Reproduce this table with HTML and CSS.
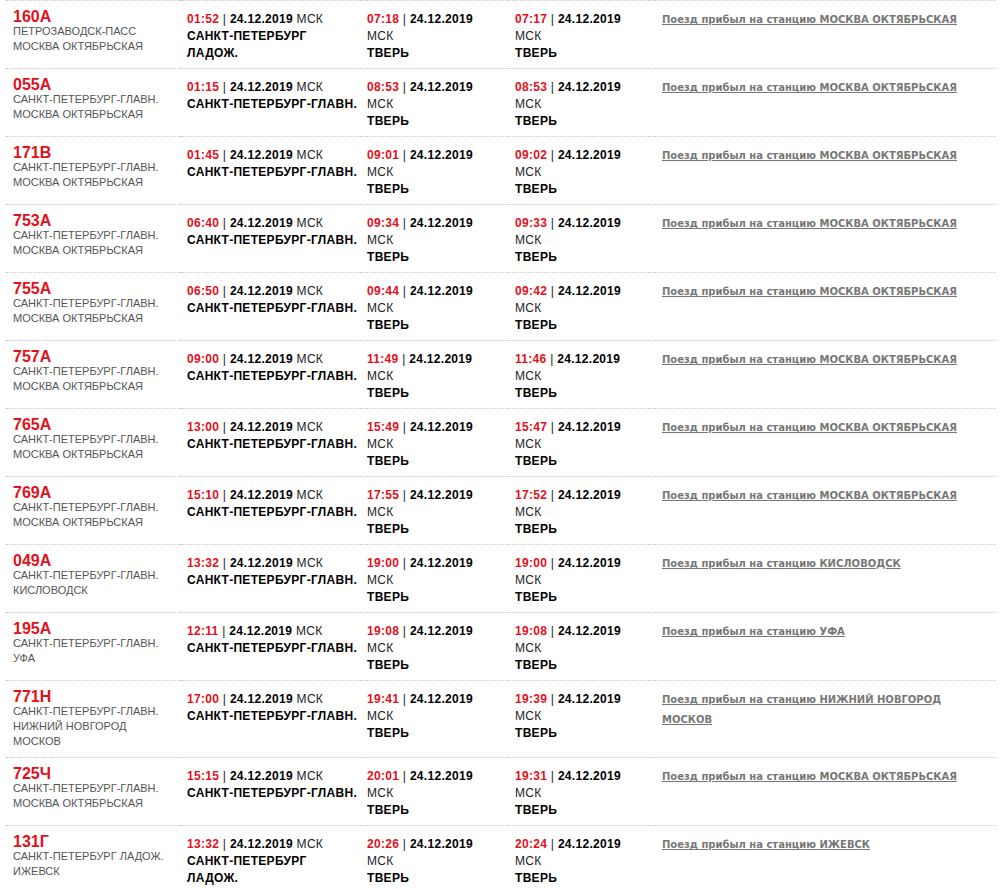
FILE: index.html
```html
<!doctype html>
<html lang="ru">
<head>
  <meta charset="utf-8">
  <title>Табло прибытия поездов</title>
  <link rel="stylesheet" href="styles.css">
</head>
<body>

<table class="trains">
  <colgroup>
    <col class="c-num"><col class="c-dep"><col class="c-arr"><col class="c-arr2"><col class="c-st">
  </colgroup>
  <tr>
    <td class="num"><div class="no">160А</div><div class="rt">ПЕТРОЗАВОДСК-ПАСС</div><div class="rt">МОСКВА ОКТЯБРЬСКАЯ</div></td>
    <td class="tm dep"><b class="t">01:52</b> | <b>24.12.2019</b> МСК<br><b>САНКТ-ПЕТЕРБУРГ<br>ЛАДОЖ.</b></td>
    <td class="tm"><b class="t">07:18</b> | <b>24.12.2019</b><br>МСК<br><b>ТВЕРЬ</b></td>
    <td class="tm"><b class="t">07:17</b> | <b>24.12.2019</b><br>МСК<br><b>ТВЕРЬ</b></td>
    <td class="st"><a href="#">Поезд прибыл на станцию МОСКВА ОКТЯБРЬСКАЯ</a></td>
  </tr>
  <tr>
    <td class="num"><div class="no">055А</div><div class="rt">САНКТ-ПЕТЕРБУРГ-ГЛАВН.</div><div class="rt">МОСКВА ОКТЯБРЬСКАЯ</div></td>
    <td class="tm dep"><b class="t">01:15</b> | <b>24.12.2019</b> МСК<br><b>САНКТ-ПЕТЕРБУРГ-ГЛАВН.</b></td>
    <td class="tm"><b class="t">08:53</b> | <b>24.12.2019</b><br>МСК<br><b>ТВЕРЬ</b></td>
    <td class="tm"><b class="t">08:53</b> | <b>24.12.2019</b><br>МСК<br><b>ТВЕРЬ</b></td>
    <td class="st"><a href="#">Поезд прибыл на станцию МОСКВА ОКТЯБРЬСКАЯ</a></td>
  </tr>
  <tr>
    <td class="num"><div class="no">171В</div><div class="rt">САНКТ-ПЕТЕРБУРГ-ГЛАВН.</div><div class="rt">МОСКВА ОКТЯБРЬСКАЯ</div></td>
    <td class="tm dep"><b class="t">01:45</b> | <b>24.12.2019</b> МСК<br><b>САНКТ-ПЕТЕРБУРГ-ГЛАВН.</b></td>
    <td class="tm"><b class="t">09:01</b> | <b>24.12.2019</b><br>МСК<br><b>ТВЕРЬ</b></td>
    <td class="tm"><b class="t">09:02</b> | <b>24.12.2019</b><br>МСК<br><b>ТВЕРЬ</b></td>
    <td class="st"><a href="#">Поезд прибыл на станцию МОСКВА ОКТЯБРЬСКАЯ</a></td>
  </tr>
  <tr>
    <td class="num"><div class="no">753А</div><div class="rt">САНКТ-ПЕТЕРБУРГ-ГЛАВН.</div><div class="rt">МОСКВА ОКТЯБРЬСКАЯ</div></td>
    <td class="tm dep"><b class="t">06:40</b> | <b>24.12.2019</b> МСК<br><b>САНКТ-ПЕТЕРБУРГ-ГЛАВН.</b></td>
    <td class="tm"><b class="t">09:34</b> | <b>24.12.2019</b><br>МСК<br><b>ТВЕРЬ</b></td>
    <td class="tm"><b class="t">09:33</b> | <b>24.12.2019</b><br>МСК<br><b>ТВЕРЬ</b></td>
    <td class="st"><a href="#">Поезд прибыл на станцию МОСКВА ОКТЯБРЬСКАЯ</a></td>
  </tr>
  <tr>
    <td class="num"><div class="no">755А</div><div class="rt">САНКТ-ПЕТЕРБУРГ-ГЛАВН.</div><div class="rt">МОСКВА ОКТЯБРЬСКАЯ</div></td>
    <td class="tm dep"><b class="t">06:50</b> | <b>24.12.2019</b> МСК<br><b>САНКТ-ПЕТЕРБУРГ-ГЛАВН.</b></td>
    <td class="tm"><b class="t">09:44</b> | <b>24.12.2019</b><br>МСК<br><b>ТВЕРЬ</b></td>
    <td class="tm"><b class="t">09:42</b> | <b>24.12.2019</b><br>МСК<br><b>ТВЕРЬ</b></td>
    <td class="st"><a href="#">Поезд прибыл на станцию МОСКВА ОКТЯБРЬСКАЯ</a></td>
  </tr>
  <tr>
    <td class="num"><div class="no">757А</div><div class="rt">САНКТ-ПЕТЕРБУРГ-ГЛАВН.</div><div class="rt">МОСКВА ОКТЯБРЬСКАЯ</div></td>
    <td class="tm dep"><b class="t">09:00</b> | <b>24.12.2019</b> МСК<br><b>САНКТ-ПЕТЕРБУРГ-ГЛАВН.</b></td>
    <td class="tm"><b class="t">11:49</b> | <b>24.12.2019</b><br>МСК<br><b>ТВЕРЬ</b></td>
    <td class="tm"><b class="t">11:46</b> | <b>24.12.2019</b><br>МСК<br><b>ТВЕРЬ</b></td>
    <td class="st"><a href="#">Поезд прибыл на станцию МОСКВА ОКТЯБРЬСКАЯ</a></td>
  </tr>
  <tr>
    <td class="num"><div class="no">765А</div><div class="rt">САНКТ-ПЕТЕРБУРГ-ГЛАВН.</div><div class="rt">МОСКВА ОКТЯБРЬСКАЯ</div></td>
    <td class="tm dep"><b class="t">13:00</b> | <b>24.12.2019</b> МСК<br><b>САНКТ-ПЕТЕРБУРГ-ГЛАВН.</b></td>
    <td class="tm"><b class="t">15:49</b> | <b>24.12.2019</b><br>МСК<br><b>ТВЕРЬ</b></td>
    <td class="tm"><b class="t">15:47</b> | <b>24.12.2019</b><br>МСК<br><b>ТВЕРЬ</b></td>
    <td class="st"><a href="#">Поезд прибыл на станцию МОСКВА ОКТЯБРЬСКАЯ</a></td>
  </tr>
  <tr>
    <td class="num"><div class="no">769А</div><div class="rt">САНКТ-ПЕТЕРБУРГ-ГЛАВН.</div><div class="rt">МОСКВА ОКТЯБРЬСКАЯ</div></td>
    <td class="tm dep"><b class="t">15:10</b> | <b>24.12.2019</b> МСК<br><b>САНКТ-ПЕТЕРБУРГ-ГЛАВН.</b></td>
    <td class="tm"><b class="t">17:55</b> | <b>24.12.2019</b><br>МСК<br><b>ТВЕРЬ</b></td>
    <td class="tm"><b class="t">17:52</b> | <b>24.12.2019</b><br>МСК<br><b>ТВЕРЬ</b></td>
    <td class="st"><a href="#">Поезд прибыл на станцию МОСКВА ОКТЯБРЬСКАЯ</a></td>
  </tr>
  <tr>
    <td class="num"><div class="no">049А</div><div class="rt">САНКТ-ПЕТЕРБУРГ-ГЛАВН.</div><div class="rt">КИСЛОВОДСК</div></td>
    <td class="tm dep"><b class="t">13:32</b> | <b>24.12.2019</b> МСК<br><b>САНКТ-ПЕТЕРБУРГ-ГЛАВН.</b></td>
    <td class="tm"><b class="t">19:00</b> | <b>24.12.2019</b><br>МСК<br><b>ТВЕРЬ</b></td>
    <td class="tm"><b class="t">19:00</b> | <b>24.12.2019</b><br>МСК<br><b>ТВЕРЬ</b></td>
    <td class="st"><a href="#">Поезд прибыл на станцию КИСЛОВОДСК</a></td>
  </tr>
  <tr>
    <td class="num"><div class="no">195А</div><div class="rt">САНКТ-ПЕТЕРБУРГ-ГЛАВН.</div><div class="rt">УФА</div></td>
    <td class="tm dep"><b class="t">12:11</b> | <b>24.12.2019</b> МСК<br><b>САНКТ-ПЕТЕРБУРГ-ГЛАВН.</b></td>
    <td class="tm"><b class="t">19:08</b> | <b>24.12.2019</b><br>МСК<br><b>ТВЕРЬ</b></td>
    <td class="tm"><b class="t">19:08</b> | <b>24.12.2019</b><br>МСК<br><b>ТВЕРЬ</b></td>
    <td class="st"><a href="#">Поезд прибыл на станцию УФА</a></td>
  </tr>
  <tr>
    <td class="num"><div class="no">771Н</div><div class="rt">САНКТ-ПЕТЕРБУРГ-ГЛАВН.</div><div class="rt">НИЖНИЙ НОВГОРОД<br>МОСКОВ</div></td>
    <td class="tm dep"><b class="t">17:00</b> | <b>24.12.2019</b> МСК<br><b>САНКТ-ПЕТЕРБУРГ-ГЛАВН.</b></td>
    <td class="tm"><b class="t">19:41</b> | <b>24.12.2019</b><br>МСК<br><b>ТВЕРЬ</b></td>
    <td class="tm"><b class="t">19:39</b> | <b>24.12.2019</b><br>МСК<br><b>ТВЕРЬ</b></td>
    <td class="st"><a href="#">Поезд прибыл на станцию НИЖНИЙ НОВГОРОД МОСКОВ</a></td>
  </tr>
  <tr>
    <td class="num"><div class="no">725Ч</div><div class="rt">САНКТ-ПЕТЕРБУРГ-ГЛАВН.</div><div class="rt">МОСКВА ОКТЯБРЬСКАЯ</div></td>
    <td class="tm dep"><b class="t">15:15</b> | <b>24.12.2019</b> МСК<br><b>САНКТ-ПЕТЕРБУРГ-ГЛАВН.</b></td>
    <td class="tm"><b class="t">20:01</b> | <b>24.12.2019</b><br>МСК<br><b>ТВЕРЬ</b></td>
    <td class="tm"><b class="t">19:31</b> | <b>24.12.2019</b><br>МСК<br><b>ТВЕРЬ</b></td>
    <td class="st"><a href="#">Поезд прибыл на станцию МОСКВА ОКТЯБРЬСКАЯ</a></td>
  </tr>
  <tr>
    <td class="num"><div class="no">131Г</div><div class="rt">САНКТ-ПЕТЕРБУРГ ЛАДОЖ.</div><div class="rt">ИЖЕВСК</div></td>
    <td class="tm dep"><b class="t">13:32</b> | <b>24.12.2019</b> МСК<br><b>САНКТ-ПЕТЕРБУРГ<br>ЛАДОЖ.</b></td>
    <td class="tm"><b class="t">20:26</b> | <b>24.12.2019</b><br>МСК<br><b>ТВЕРЬ</b></td>
    <td class="tm"><b class="t">20:24</b> | <b>24.12.2019</b><br>МСК<br><b>ТВЕРЬ</b></td>
    <td class="st"><a href="#">Поезд прибыл на станцию ИЖЕВСК</a></td>
  </tr>
</table>

</body>
</html>
```

FILE: styles.css
```css
BODY { margin: 0; background: #fff; font-family: "Liberation Sans", Arial, sans-serif; }

.trains {
  margin-left: 6px;
  width: 990px;
  border-collapse: collapse;
  table-layout: fixed;
}
.c-num { width: 174px; }
.c-dep { width: 180px; }
.c-arr { width: 148px; }
.c-arr2 { width: 147px; }
.c-st { width: 341px; }

.trains TD {
  vertical-align: top;
  border-top: 1px dotted #c8c8c8;
  padding: 8px 6px 8px 7px;
}

.num .no { font: bold 16px/15px "Liberation Sans", Arial, sans-serif; color: #e3101b; }
.num .rt { font-size: 11px; line-height: 15px; color: #555; }

.tm { font-size: 12px; line-height: 17px; color: #222; letter-spacing: 0.3px; }
.tm b { color: #000; }
.tm b.t { color: #e3101b; }
.trains TD.tm { padding: 10px 14px 6px 7px; }
.trains TD.dep { padding-right: 2px; }

.st { font: bold 10px/20px "DejaVu Sans", Verdana, sans-serif; }
.trains TD.st { padding-top: 9px; padding-right: 24px; }
.st a { color: #777; text-decoration: underline; }
```
